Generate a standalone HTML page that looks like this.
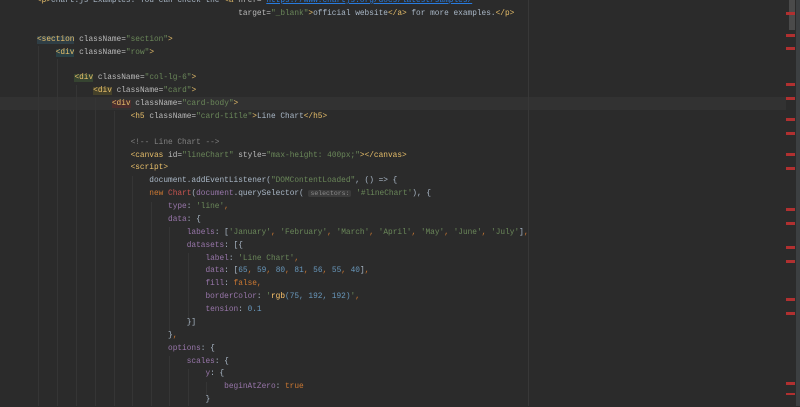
<!DOCTYPE html>
<html><head><style>
html,body{margin:0;padding:0;background:#2b2b2b;width:800px;height:406px;overflow:hidden}
.hl{position:absolute;left:0;width:786px;top:97px;height:13px;background:#323232}
pre{position:absolute;left:37px;top:-5px;margin:0;font-family:"Liberation Mono",monospace;font-size:7.8px;line-height:12.87px;color:#a9b7c6}
.t{color:#e8bf6a}.a{color:#bababa}.s{color:#6a8759}.k{color:#cc7832}.n{color:#6897bb}.p{color:#9876aa}.c{color:#808080}.u{color:#287bde;text-decoration:underline}.f{color:#ffc66d}
.b1{background:#2f3e45}.b2{background:#2a4044}.b3{background:#364431}.b4{background:#45412a}.b5{background:#4a2d2d}
.hint{background:#3b3b3b;color:#8a8a8a;font-size:6.5px;border-radius:2px;padding:0 2px}
.g{position:absolute;width:1px;background:#353535}
.m{position:absolute;left:786px;width:9px;height:3px;background:#b03030}
.sb{position:absolute;left:796px;top:0;width:4px;height:406px;background:#3c3f41}
.th{position:absolute;left:789px;top:0;width:6px;height:30px;background:#4a4a4a}
.rm{position:absolute;left:528px;top:0;width:1px;height:406px;background:#383838}
</style></head><body>
<div class="hl"></div>
<div class="rm"></div>
<div class="g" style="left:38px;top:46px;height:360px"></div>
<div class="g" style="left:57px;top:59px;height:347px"></div>
<div class="g" style="left:76px;top:85px;height:321px"></div>
<div class="g" style="left:95px;top:98px;height:308px"></div>
<div class="g" style="left:114px;top:111px;height:295px"></div>
<div class="g" style="left:132px;top:176px;height:230px"></div>
<div class="g" style="left:151px;top:202px;height:204px"></div>
<div class="g" style="left:169px;top:227px;height:105px"></div>
<div class="g" style="left:169px;top:356px;height:50px"></div>
<div class="g" style="left:188px;top:253px;height:66px"></div>
<div class="g" style="left:188px;top:369px;height:37px"></div>
<div class="g" style="left:206px;top:382px;height:13px"></div>
<pre><span class="t">&lt;p&gt;</span>Chart.js Examples. You can check the <span class="t">&lt;a</span> <span class="a">href=</span><span class="s">"<span class="u">https://www.chartjs.org/docs/latest/samples/</span>"</span>
                                           <span class="a">target=</span><span class="s">"_blank"</span><span class="t">&gt;</span>official website<span class="t">&lt;/a&gt;</span> for more examples.<span class="t">&lt;/p&gt;</span>

<span class="t"><span class="b1">&lt;section</span> </span><span class="a">className=</span><span class="s">"section"</span><span class="t">&gt;</span>
    <span class="t b2">&lt;div</span> <span class="a">className=</span><span class="s">"row"</span><span class="t">&gt;</span>

        <span class="t b3">&lt;div</span> <span class="a">className=</span><span class="s">"col-lg-6"</span><span class="t">&gt;</span>
            <span class="t b4">&lt;div</span> <span class="a">className=</span><span class="s">"card"</span><span class="t">&gt;</span>
                <span class="t b5">&lt;div</span> <span class="a">className=</span><span class="s">"card-body"</span><span class="t">&gt;</span>
                    <span class="t">&lt;h5</span> <span class="a">className=</span><span class="s">"card-title"</span><span class="t">&gt;</span>Line Chart<span class="t">&lt;/h5&gt;</span>

                    <span class="c">&lt;!-- Line Chart --&gt;</span>
                    <span class="t">&lt;canvas</span> <span class="a">id=</span><span class="s">"lineChart"</span> <span class="a">style=</span><span class="s">"max-height: 400px;"</span><span class="t">&gt;&lt;/canvas&gt;</span>
                    <span class="t">&lt;script&gt;</span>
                        document.addEventListener(<span class="s">"DOMContentLoaded"</span>, () =&gt; {
                        <span class="k">new</span> <span style="color:#c75450">Chart</span>(<span class="p">document</span>.querySelector( <span class="hint">selectors:</span> <span class="s">'#lineChart'</span>), {
                            <span class="p">type</span>: <span class="s">'line'</span><span class="k">,</span>
                            <span class="p">data</span>: {
                                <span class="p">labels</span>: [<span class="s">'January'</span><span class="k">,</span> <span class="s">'February'</span><span class="k">,</span> <span class="s">'March'</span><span class="k">,</span> <span class="s">'April'</span><span class="k">,</span> <span class="s">'May'</span><span class="k">,</span> <span class="s">'June'</span><span class="k">,</span> <span class="s">'July'</span>]<span class="k">,</span>
                                <span class="p">datasets</span>: [{
                                    <span class="p">label</span>: <span class="s">'Line Chart'</span><span class="k">,</span>
                                    <span class="p">data</span>: [<span class="n">65</span><span class="k">,</span> <span class="n">59</span><span class="k">,</span> <span class="n">80</span><span class="k">,</span> <span class="n">81</span><span class="k">,</span> <span class="n">56</span><span class="k">,</span> <span class="n">55</span><span class="k">,</span> <span class="n">40</span>]<span class="k">,</span>
                                    <span class="p">fill</span>: <span class="k">false,</span>
                                    <span class="p">borderColor</span>: <span class="s">'<span class="f">rgb</span><span class="n">(75, 192, 192)</span>'</span><span class="k">,</span>
                                    <span class="p">tension</span>: <span class="n">0.1</span>
                                }]
                            }<span class="k">,</span>
                            <span class="p">options</span>: {
                                <span class="p">scales</span>: {
                                    <span class="p">y</span>: {
                                        <span class="p">beginAtZero</span>: <span class="k">true</span>
                                    }</pre>
<div class="sb"></div>
<div class="th"></div>
<div class="m" style="top:12px"></div><div class="m" style="top:34px"></div><div class="m" style="top:47px"></div><div class="m" style="top:83px"></div><div class="m" style="top:97px"></div><div class="m" style="top:118px"></div><div class="m" style="top:132px"></div><div class="m" style="top:153px"></div><div class="m" style="top:167px"></div><div class="m" style="top:208px"></div><div class="m" style="top:222px"></div><div class="m" style="top:246px"></div><div class="m" style="top:260px"></div><div class="m" style="top:298px"></div><div class="m" style="top:312px"></div><div class="m" style="top:382px"></div><div class="m" style="top:393px;height:2px"></div>
</body></html>
